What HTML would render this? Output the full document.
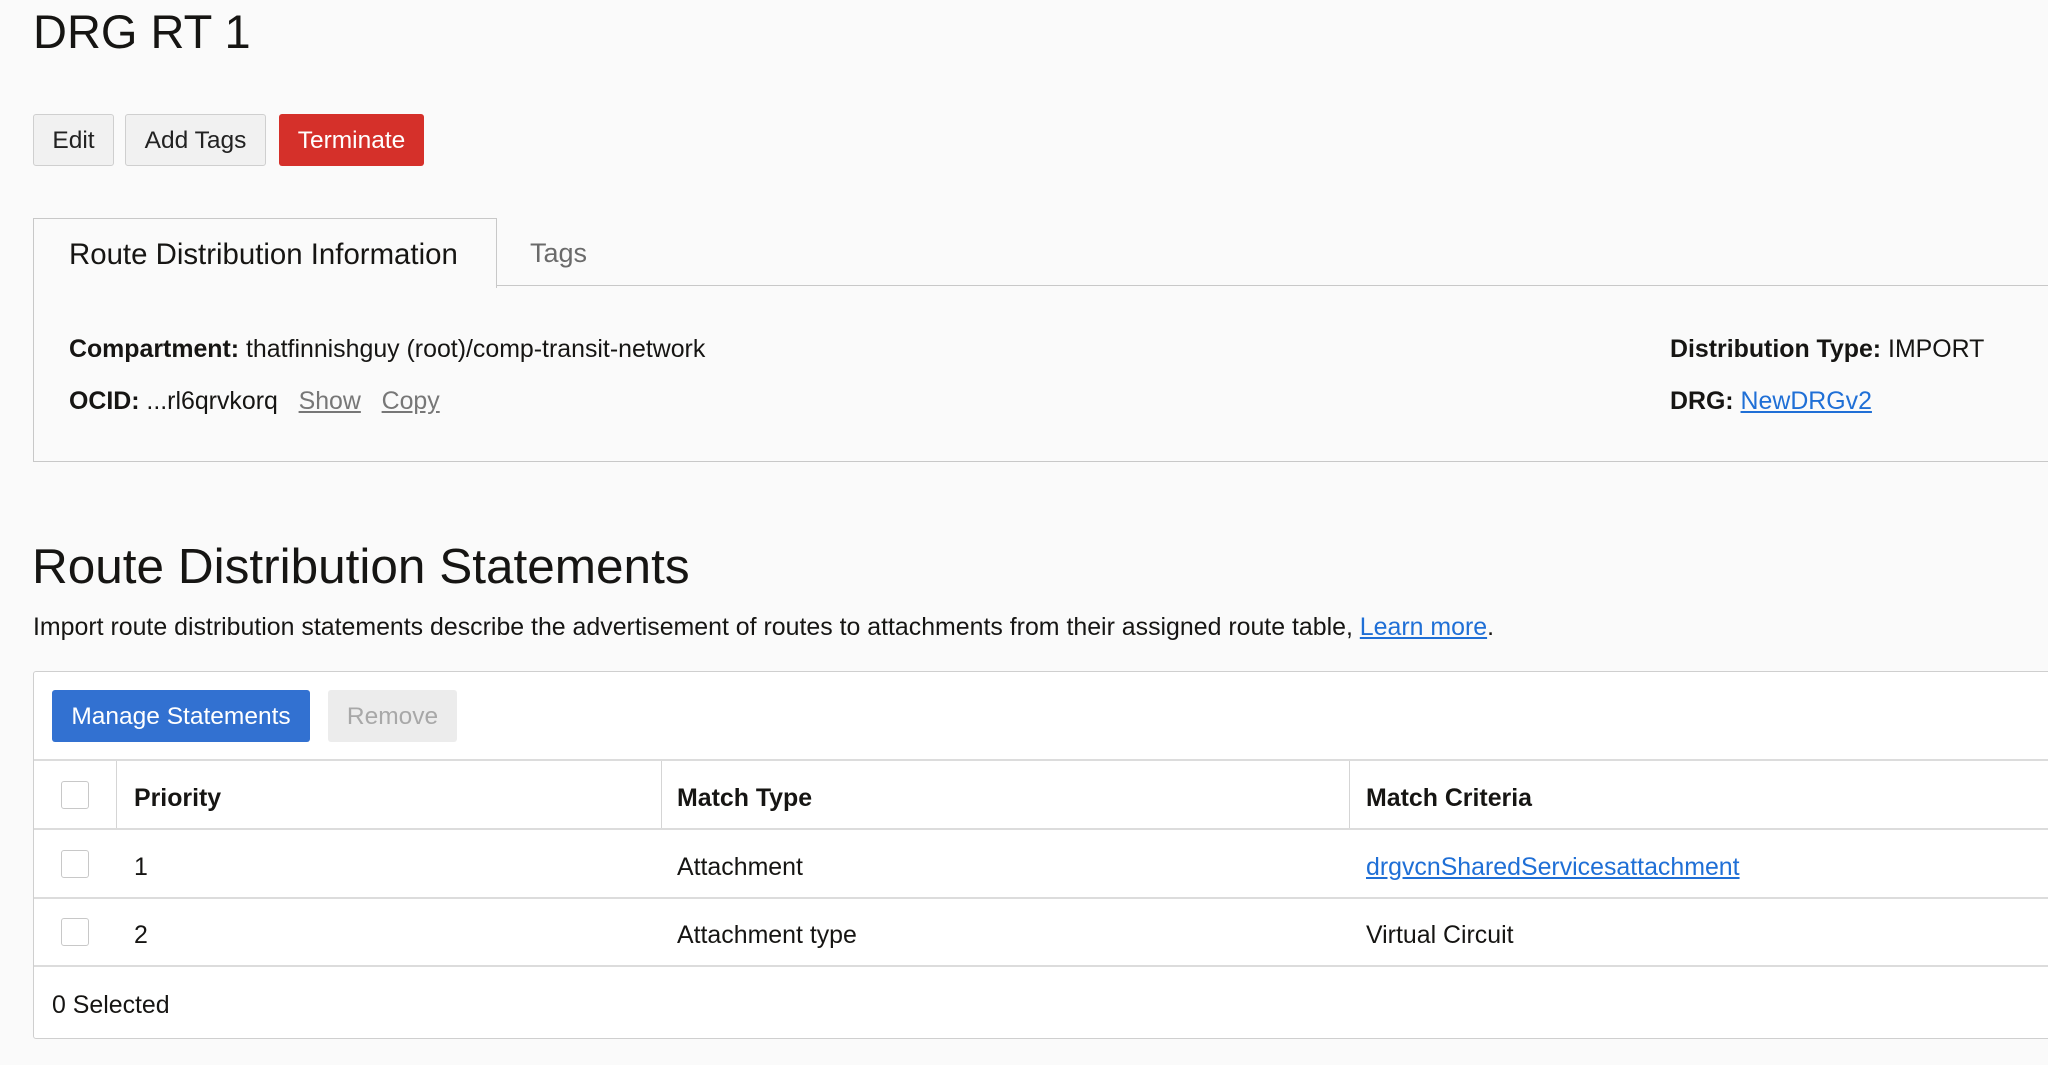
<!DOCTYPE html>
<html><head><meta charset="utf-8"><style>
*{margin:0;padding:0;box-sizing:border-box}
body{width:2048px;height:1065px;background:#fafafa;font-family:"Liberation Sans",Arial,sans-serif;color:#161513;position:relative;overflow:hidden}
.a{position:absolute;white-space:nowrap}
.btn{position:absolute;height:52px;border-radius:3px;font-size:24.5px;display:flex;align-items:center;justify-content:center;padding-top:2px}
.g{background:#f1f1f1;border:1px solid #cfcfcf;color:#222}
a{color:#1f6fd6;text-decoration:underline}
.cb{position:absolute;width:28px;height:28px;border:1.5px solid #c8c8c8;border-radius:3px;background:#fff}
.t{font-size:24.9px}
b{font-weight:bold}
</style></head><body>
<div class="a" style="left:33px;top:4px;font-size:47px;">DRG RT 1</div>
<div class="btn g" style="left:33px;top:114px;width:81px">Edit</div>
<div class="btn g" style="left:125px;top:114px;width:141px">Add Tags</div>
<div class="btn" style="left:279px;top:114px;width:145px;background:#d5302a;color:#fff">Terminate</div>

<div class="a" style="left:33px;top:285px;width:2015px;height:177px;border-left:1.5px solid #c8c8c8;border-bottom:1.5px solid #c8c8c8;border-top:1.5px solid #c8c8c8"></div>
<div class="a" style="left:33px;top:218px;width:464px;height:70px;border:1.5px solid #c8c8c8;border-bottom:none;background:#fafafa"></div>
<div class="a" style="left:69px;top:238px;font-size:29.4px">Route Distribution Information</div>
<div class="a" style="left:530px;top:238px;font-size:27px;color:#6a6a6a">Tags</div>

<div class="a t" style="left:69px;top:335px"><b>Compartment:</b> thatfinnishguy (root)/comp-transit-network</div>
<div class="a t" style="left:69px;top:387px"><b>OCID:</b> ...rl6qrvkorq &nbsp;&nbsp;<span style="color:#777;text-decoration:underline">Show</span>&nbsp;&nbsp; <span style="color:#777;text-decoration:underline">Copy</span></div>
<div class="a t" style="left:1670px;top:335px"><b>Distribution Type:</b> IMPORT</div>
<div class="a t" style="left:1670px;top:387px"><b>DRG:</b> <a>NewDRGv2</a></div>

<div class="a" style="left:32px;top:538px;font-size:49.5px">Route Distribution Statements</div>
<div class="a t" style="left:33px;top:613px">Import route distribution statements describe the advertisement of routes to attachments from their assigned route table, <a>Learn more</a>.</div>

<div class="a" style="left:33px;top:671px;width:2020px;height:368px;background:#fff;border:1.5px solid #cfcfcf;border-radius:3px"></div>
<div class="btn" style="left:52px;top:690px;width:258px;background:#3271d1;color:#fff">Manage Statements</div>
<div class="btn" style="left:328px;top:690px;width:129px;background:#ececec;color:#a8a8a8">Remove</div>
<div class="a" style="left:34px;top:759px;width:2014px;border-top:2px solid #dcdcdc"></div>
<div class="a" style="left:34px;top:828px;width:2014px;border-top:2px solid #dcdcdc"></div>
<div class="a" style="left:34px;top:897px;width:2014px;border-top:2px solid #dcdcdc"></div>
<div class="a" style="left:34px;top:965px;width:2014px;border-top:2px solid #dcdcdc"></div>
<div class="a" style="left:116px;top:761px;height:67px;border-left:1px solid #d5d5d5"></div>
<div class="a" style="left:661px;top:761px;height:67px;border-left:1px solid #d5d5d5"></div>
<div class="a" style="left:1349px;top:761px;height:67px;border-left:1px solid #d5d5d5"></div>
<div class="cb" style="left:61px;top:781px"></div>
<div class="cb" style="left:61px;top:850px"></div>
<div class="cb" style="left:61px;top:918px"></div>
<div class="a t" style="left:134px;top:784px"><b>Priority</b></div>
<div class="a t" style="left:677px;top:784px"><b>Match Type</b></div>
<div class="a t" style="left:1366px;top:784px"><b>Match Criteria</b></div>
<div class="a t" style="left:134px;top:853px">1</div>
<div class="a t" style="left:677px;top:853px">Attachment</div>
<div class="a t" style="left:1366px;top:853px"><a>drgvcnSharedServicesattachment</a></div>
<div class="a t" style="left:134px;top:921px">2</div>
<div class="a t" style="left:677px;top:921px">Attachment type</div>
<div class="a t" style="left:1366px;top:921px">Virtual Circuit</div>
<div class="a t" style="left:52px;top:991px">0 Selected</div>
</body></html>
